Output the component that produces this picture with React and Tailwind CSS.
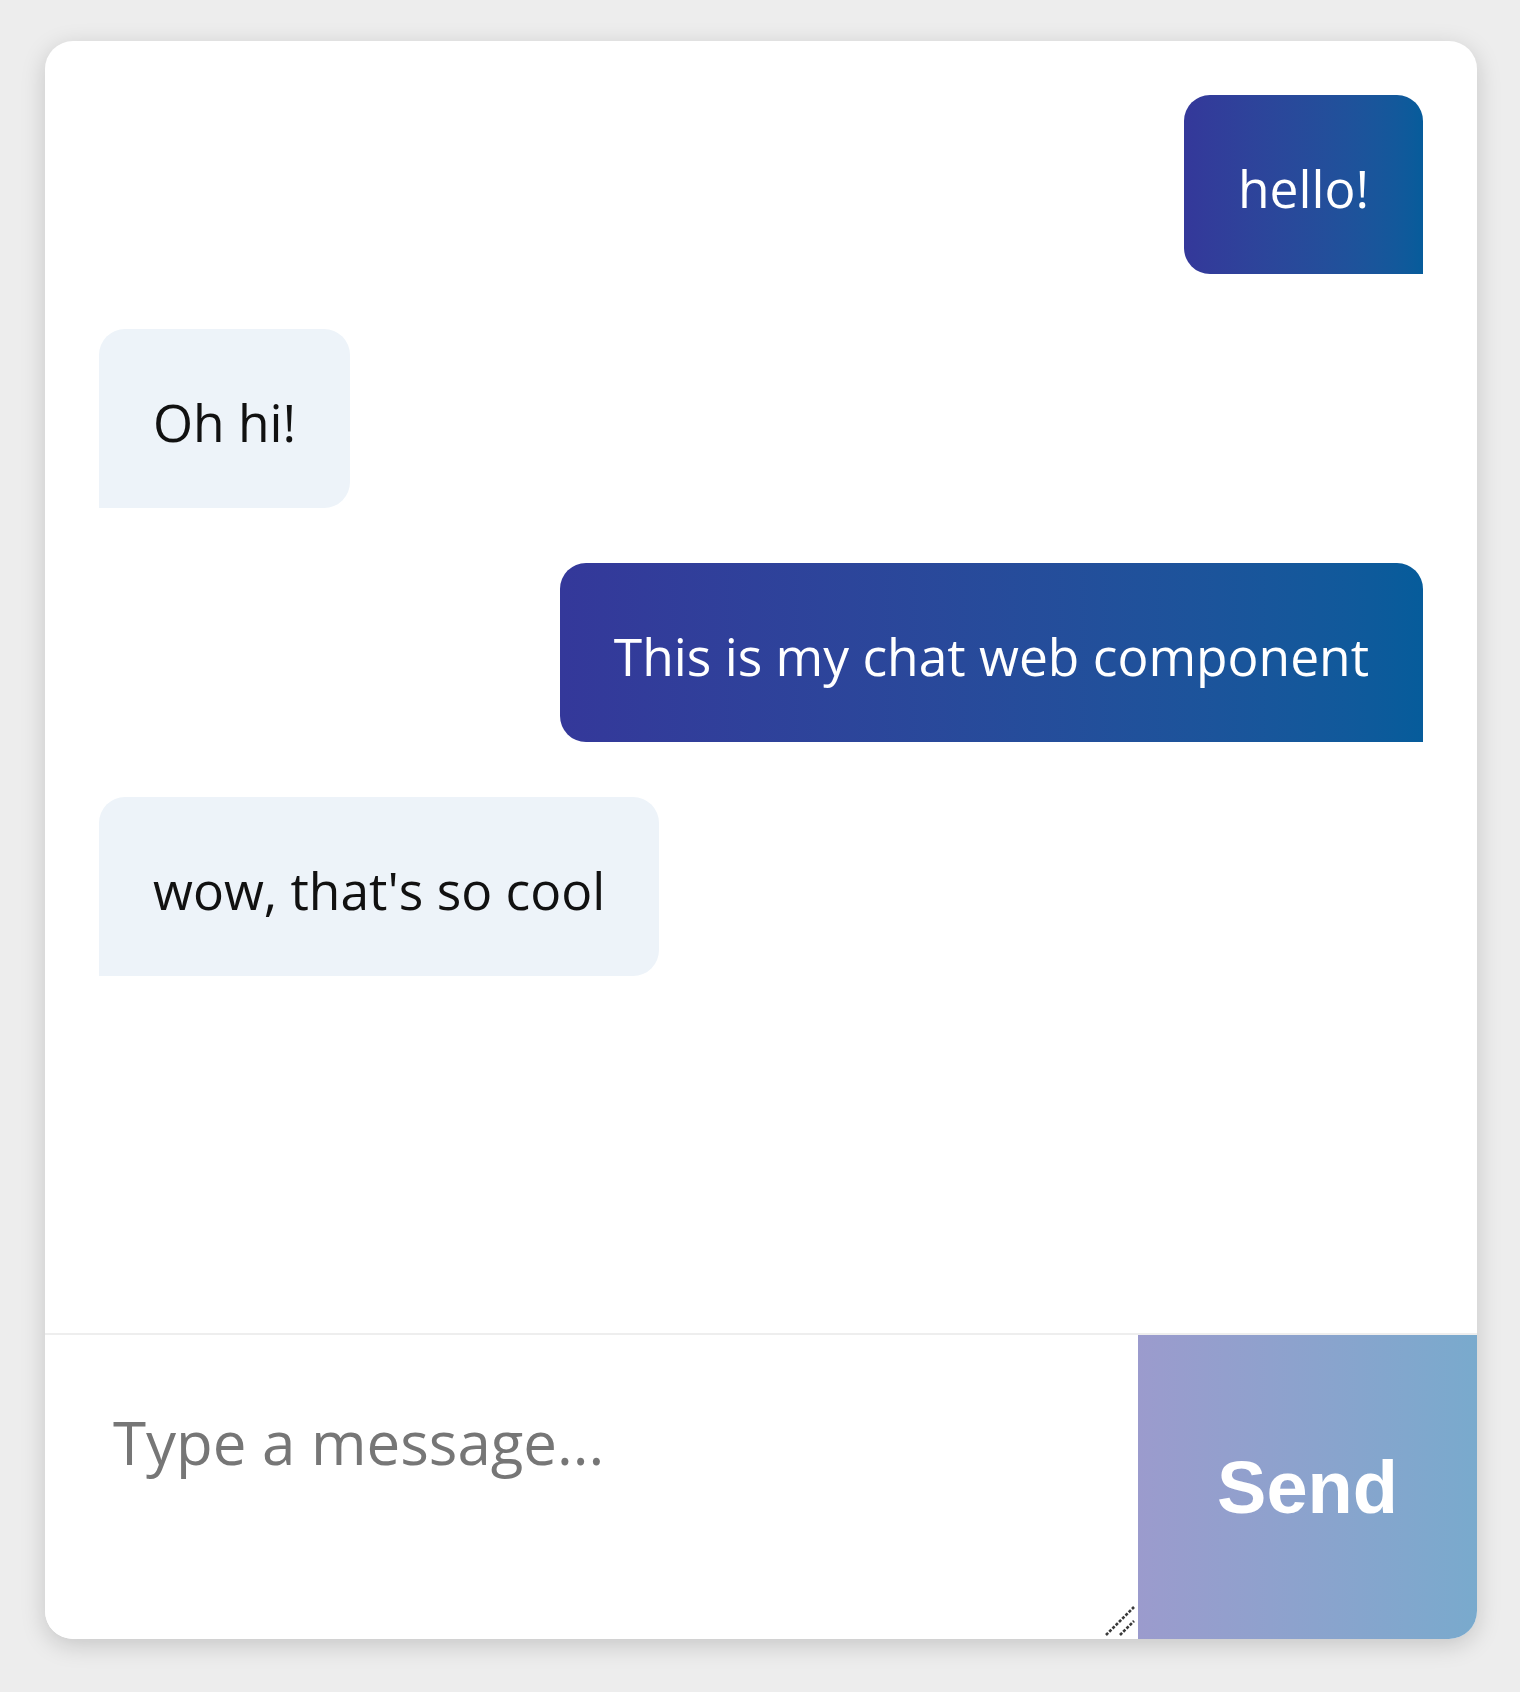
import React from "react";

const Sent = ({ children }) => (
  <div className="self-end rounded-[26px] rounded-br-none bg-gradient-to-r from-[#34389a] to-[#065c9b] px-[54px] pt-[58px] pb-[50px] text-white leading-[71px]">
    {children}
  </div>
);

const Received = ({ children }) => (
  <div className="self-start rounded-[26px] rounded-bl-none bg-[#edf3f9] px-[54px] pt-[58px] pb-[50px] text-[#111] leading-[71px]">
    {children}
  </div>
);

export default function App() {
  return (
    <div className="min-h-[1692px] w-full bg-[#ededed] pt-[41px] pl-[45px]">
      <div
        className="flex h-[1598px] w-[1432px] flex-col overflow-hidden rounded-[28px] bg-white shadow-[0_6px_24px_rgba(0,0,0,0.17)]"
        style={{ fontFamily: '"Open Sans", "Noto Sans", sans-serif' }}
      >
        <div className="flex flex-1 flex-col gap-[55px] p-[54px] text-[51.5px]">
          <Sent>hello!</Sent>
          <Received>Oh hi!</Received>
          <Sent>This is my chat web component</Sent>
          <Received>wow, that's so cool</Received>
        </div>
        <div className="flex h-[306px] border-t-2 border-[#eeeeee]">
          <div className="relative flex-1">
            <textarea
              className="h-full w-full resize-none bg-white px-[68px] py-[66px] text-[60px] leading-[82px] text-[#333] outline-none placeholder:text-[#767676]"
              style={{ fontFamily: '"Open Sans", "Noto Sans", sans-serif' }}
              placeholder="Type a message..."
            />
            <svg
              className="pointer-events-none absolute right-[2px] bottom-[2px]"
              width="32"
              height="32"
              viewBox="0 0 32 32"
            >
              <line x1="2" y1="30" x2="30" y2="2" stroke="#3a3a3a" strokeWidth="2.6" strokeDasharray="3 1.6" />
              <line x1="16" y1="30" x2="30" y2="16" stroke="#3a3a3a" strokeWidth="2.6" strokeDasharray="3 1.6" />
            </svg>
          </div>
          <button
            className="w-[339px] bg-gradient-to-r from-[#9b9bcd] to-[#79aacd] text-[74px] font-bold text-white"
            style={{ fontFamily: '"Liberation Sans", Arial, sans-serif' }}
          >
            Send
          </button>
        </div>
      </div>
    </div>
  );
}
